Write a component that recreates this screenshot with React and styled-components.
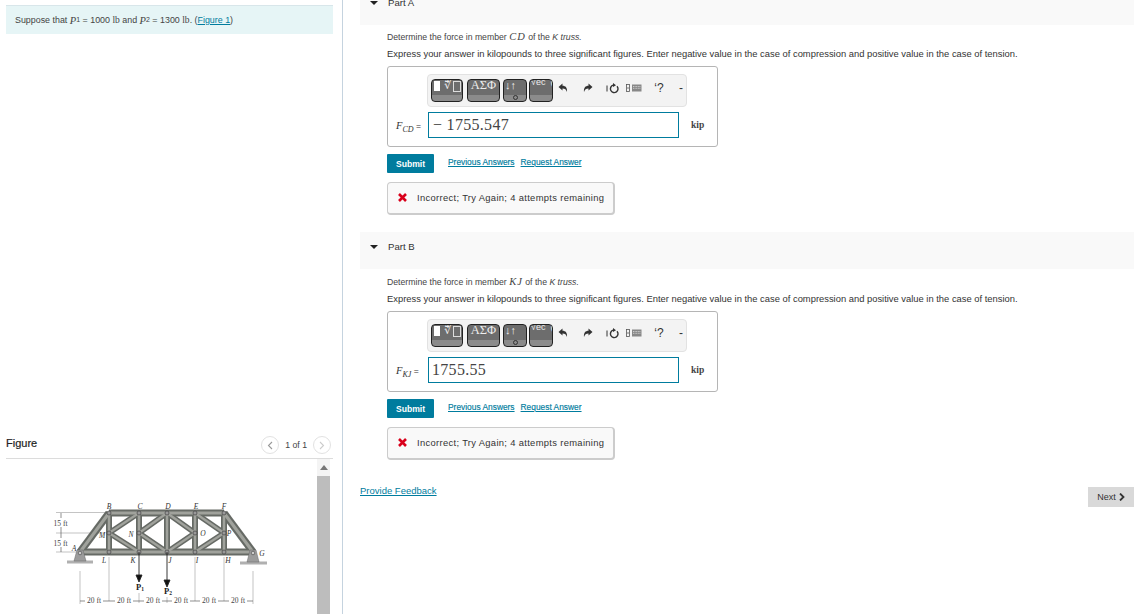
import React from "react";
import styled, { createGlobalStyle } from "styled-components";

const GlobalStyle = createGlobalStyle`
  html, body {
    margin: 0;
    padding: 0;
    background: #fff;
    overflow: hidden;
    font-family: "Liberation Sans", Arial, sans-serif;
    color: #333;
  }
`;

const Page = styled.div`
  display: flex;
  width: 1143px;
  height: 614px;
  overflow: hidden;
`;

const LeftColumn = styled.div`
  width: 343px;
  height: 614px;
  flex: none;
  box-sizing: border-box;
  border-right: 1px solid #c5d3df;
  padding: 5px 9px 0 6px;
  display: flex;
  flex-direction: column;
`;

const IntroBox = styled.div`
  height: 29px;
  box-sizing: border-box;
  background: #e6f5f6;
  border-top: 1px solid #d8e6ea;
  padding: 0 9px;
  display: flex;
  align-items: center;
  font-size: 8.9px;
  color: #444;
  white-space: pre;
`;

const TextLink = styled.a`
  color: #007c9e;
  text-decoration: underline;
`;

const MathVar = styled.span`
  font-family: "Liberation Serif", serif;
  font-style: italic;
  font-size: ${(p) => p.$size || 10.5}px;
  letter-spacing: ${(p) => p.$spacing || 0}px;
`;

const MathRoman = styled.span`
  font-family: "Liberation Serif", serif;
  font-size: 9.5px;
`;

const Sub = styled.sub`
  font-size: 7px;
  line-height: 0;
`;

const FigureHeader = styled.div`
  margin-top: 396px;
  height: 29px;
  box-sizing: border-box;
  border-bottom: 1px solid #dcdcdc;
  display: flex;
  align-items: flex-start;
  justify-content: space-between;
`;

const FigureTitle = styled.div`
  font-size: 11px;
  color: #222;
  margin-top: 7px;
  -webkit-text-stroke: 0.2px #222;
`;

const Pager = styled.div`
  display: flex;
  align-items: center;
  gap: 6px;
  margin-top: 6px;
  margin-right: 2px;
  font-size: 8.7px;
  color: #444;
`;

const PagerButton = styled.div`
  width: 16px;
  height: 16px;
  border: 1px solid #e2e2e2;
  border-radius: 50%;
  display: flex;
  align-items: center;
  justify-content: center;
`;

const FigureBody = styled.div`
  flex: 1;
  display: flex;
  justify-content: space-between;
  overflow: hidden;
  margin-left: -6px;
  margin-right: 3px;
`;

const Scrollbar = styled.div`
  width: 13px;
  background: #f4f4f4;
  display: flex;
  flex-direction: column;
  align-items: center;
`;

const ScrollArrow = styled.div`
  height: 17px;
  flex: none;
  display: flex;
  align-items: center;
  justify-content: center;
`;

const ScrollThumb = styled.div`
  flex: 1;
  width: 100%;
  background: #bdbdbd;
`;

const RightColumn = styled.div`
  flex: 1;
  padding: 0 9px 0 17px;
  display: flex;
  flex-direction: column;
`;

const PartHeader = styled.div`
  height: 37px;
  flex: none;
  box-sizing: border-box;
  background: #f9f9f9;
  display: flex;
  align-items: flex-start;
  padding-top: 9px;
  margin-top: ${(p) => p.$top || 0}px;
  font-size: 9.6px;
  color: #333;
`;

const Caret = styled.div`
  width: 0;
  height: 0;
  margin: 4px 10px 0 10px;
  border-left: 4px solid transparent;
  border-right: 4px solid transparent;
  border-top: 4px solid #222;
`;

const PartBody = styled.div`
  padding-left: 27px;
  display: flex;
  flex-direction: column;
  align-items: flex-start;
`;

const Prompt = styled.div`
  height: 17px;
  line-height: 17px;
  margin-top: ${(p) => p.$top || 0}px;
  font-size: 8.7px;
  color: #444;
  white-space: pre;
`;

const Instructions = styled(Prompt)`
  font-size: 9.4px;
  color: #333;
`;

const AnswerBox = styled.div`
  width: 331px;
  height: 81px;
  box-sizing: border-box;
  margin-top: ${(p) => p.$top || 0}px;
  border: 1px solid #b5b5b5;
  border-radius: 3px;
  padding: 7px 0 0 8px;
`;

const Toolbar = styled.div`
  width: 260px;
  height: 33px;
  box-sizing: border-box;
  margin-left: 31px;
  background: #f3f3f3;
  border: 1px solid #e2e2e2;
  border-radius: 4px;
  display: flex;
  align-items: center;
  padding-left: 3px;
`;

const ToolButton = styled.div`
  width: ${(p) => p.$w}px;
  height: 23px;
  box-sizing: border-box;
  margin-right: ${(p) => p.$gap}px;
  flex: none;
  position: relative;
  border: 1px solid #222;
  border-radius: 4px;
  background: linear-gradient(#6d6d6d 0 72%, #8b8b8b 72% 100%);
  color: #eee;
  overflow: hidden;
  display: flex;
  align-items: flex-start;
  justify-content: ${(p) => (p.$start ? "flex-start" : "center")};
  gap: 1px;
  padding: 0 0 0 ${(p) => (p.$start ? 1 : 0)}px;
  font-family: ${(p) => (p.$sans ? '"Liberation Sans", sans-serif' : '"Liberation Serif", serif')};
  font-size: ${(p) => p.$size || 12}px;
  line-height: ${(p) => p.$line || 11}px;
  white-space: pre;
`;

const WhiteSquare = styled.span`
  width: 6px;
  height: 10px;
  margin-top: 1px;
  background: #fff;
`;

const OutlineSquare = styled.span`
  width: 6px;
  height: 9px;
  margin-top: 1px;
  border: 1px solid #ddd;
`;

const ToolDot = styled.span`
  position: absolute;
  left: 9px;
  bottom: 1px;
  width: 3px;
  height: 3px;
  border: 1px solid #333;
  border-radius: 50%;
`;

const ToolIcons = styled.div`
  display: flex;
  align-items: center;
  margin: 0 0 5px -2px;
  color: #333;
  font-size: 12px;
`;

const IconSlot = styled.div`
  width: ${(p) => p.$w}px;
  display: flex;
  justify-content: center;
`;

const AnswerRow = styled.div`
  display: flex;
  align-items: center;
  margin-top: 5px;
  height: 26px;
`;

const AnswerLabel = styled.div`
  width: 32px;
  flex: none;
  font-size: 8.6px;
  color: #333;
  white-space: pre;
`;

const LabelSub = styled.sub`
  font-size: 8px;
  line-height: 0;
`;

const AnswerInput = styled.div`
  width: 251px;
  height: 26px;
  box-sizing: border-box;
  flex: none;
  border: 1px solid #007c9e;
  padding-left: ${(p) => p.$pad}px;
  display: flex;
  align-items: center;
  font-family: "Liberation Serif", serif;
  font-size: 16px;
  letter-spacing: 0.3px;
  color: #444;
  white-space: pre;
`;

const Unit = styled.div`
  margin-left: 12px;
  font-family: "Liberation Serif", serif;
  font-weight: bold;
  font-size: 9.5px;
  color: #444;
`;

const ActionRow = styled.div`
  display: flex;
  align-items: flex-start;
  margin-top: 7px;
`;

const SubmitButton = styled.div`
  width: 47px;
  height: 19px;
  background: #007c9e;
  border-radius: 1px;
  color: #fff;
  font-size: 8.6px;
  font-weight: bold;
  display: flex;
  align-items: center;
  justify-content: center;
`;

const ActionLink = styled(TextLink)`
  font-size: 8.4px;
  margin-top: 3px;
  -webkit-text-stroke: 0.15px #007c9e;
  margin-left: ${(p) => p.$left}px;
`;

const Feedback = styled.div`
  width: 228px;
  height: 33px;
  box-sizing: border-box;
  margin-top: 9px;
  margin-bottom: ${(p) => p.$bottom || 0}px;
  background: #f9f9f9;
  border: 1px solid #ccc;
  border-bottom-width: 2px;
  border-right-width: 2px;
  border-radius: 4px;
  display: flex;
  align-items: center;
  padding: 0 0 1px 10px;
  gap: 10px;
  font-size: 9.4px;
  letter-spacing: 0.33px;
  color: #333;
  white-space: pre;
`;

const Footer = styled.div`
  display: flex;
  justify-content: space-between;
  align-items: flex-start;
  margin-top: 27px;
`;

const FeedbackLink = styled(TextLink)`
  font-size: 9.5px;
  margin-top: -2px;
`;

const NextButton = styled.div`
  width: 46px;
  height: 20px;
  box-sizing: border-box;
  padding-bottom: 1px;
  background: #d9d9d9;
  display: flex;
  align-items: center;
  justify-content: center;
  gap: 3px;
  font-size: 9px;
  color: #333;
`;

const CrossIcon = () => (
  <svg width="9" height="9" viewBox="0 0 9 9">
    <path d="M1 1 L8 8 M8 1 L1 8" stroke="#d9001b" strokeWidth="2.6" />
  </svg>
);

const UndoIcon = ({ flip }) => (
  <svg width="10" height="10" viewBox="0 0 10 10" transform={flip ? "scale(-1 1)" : undefined}>
    <path d="M0.5 4 L4.5 0.5 V2.8 C7.5 2.8 9.5 4.8 9 9 C8.2 6.5 7 5.4 4.5 5.4 V7.6 Z" fill="#333" />
  </svg>
);

const ResetIcon = () => (
  <svg width="14" height="11" viewBox="0 0 14 11">
    <path d="M1 2.5 V8.5" stroke="#333" strokeWidth="1" />
    <path d="M7 2.2 A3.8 3.8 0 1 0 11 3.2" fill="none" stroke="#333" strokeWidth="1.4" />
    <path d="M7 0 L10 2.2 L7 4 Z" fill="#333" />
  </svg>
);

const KeyboardIcon = () => (
  <svg width="16" height="8" viewBox="0 0 16 8">
    <rect x="0.5" y="0.5" width="3" height="7" fill="none" stroke="#555" strokeWidth="0.8" />
    <path d="M1 4 H3" stroke="#555" strokeWidth="0.8" />
    <rect x="6" y="0.5" width="9.5" height="7" fill="#888" />
    <path d="M7 2.5 H14.5 M7 4.3 H14.5" stroke="#ddd" strokeWidth="0.8" strokeDasharray="1 0.6" />
  </svg>
);

const MathToolbar = () => (
  <Toolbar>
    <ToolButton $w={32} $gap={4}>
      <WhiteSquare />
      {" ∜"}
      <OutlineSquare />
    </ToolButton>
    <ToolButton $w={33} $gap={3} $size={12.5}>ΑΣΦ</ToolButton>
    <ToolButton $w={24} $gap={2} $start $sans $size={11}>
      ↓↑
      <ToolDot />
    </ToolButton>
    <ToolButton $w={24} $gap={0} $start $sans $size={9} $line={5}>√ec  (</ToolButton>
    <ToolIcons>
      <IconSlot $w={24}><UndoIcon /></IconSlot>
      <IconSlot $w={26}><UndoIcon flip /></IconSlot>
      <IconSlot $w={23}><ResetIcon /></IconSlot>
      <IconSlot $w={20}><KeyboardIcon /></IconSlot>
      <IconSlot $w={30}>‘?</IconSlot>
      <IconSlot $w={14}>-</IconSlot>
    </ToolIcons>
  </Toolbar>
);

const PartBlock = ({ name, top, member, symbol, sub, value, pad, promptTop, boxTop, bottom }) => (
  <>
    <PartHeader $top={top}>
      <Caret />
      {name}
    </PartHeader>
    <PartBody>
      <Prompt $top={promptTop}>
        {"Determine the force in member "}
        <MathVar $spacing={1}>{member}</MathVar>
        {" of the "}
        <i>K truss.</i>
      </Prompt>
      <Instructions>
        Express your answer in kilopounds to three significant figures. Enter negative value in the case of compression and positive value in the case of tension.
      </Instructions>
      <AnswerBox $top={boxTop}>
        <MathToolbar />
        <AnswerRow>
          <AnswerLabel>
            <MathVar>{symbol}</MathVar>
            <LabelSub><MathVar $size={8}>{sub}</MathVar></LabelSub>
            {" ="}
          </AnswerLabel>
          <AnswerInput $pad={pad}>{value}</AnswerInput>
          <Unit>kip</Unit>
        </AnswerRow>
      </AnswerBox>
      <ActionRow>
        <SubmitButton>Submit</SubmitButton>
        <ActionLink $left={14}>Previous Answers</ActionLink>
        <ActionLink $left={6}>Request Answer</ActionLink>
      </ActionRow>
      <Feedback $bottom={bottom}>
        <CrossIcon />
        Incorrect; Try Again; 4 attempts remaining
      </Feedback>
    </PartBody>
  </>
);

// [x1, y1, x2, y2, outer stroke width]
const members = [
  [109, 514, 224, 514, 7], [80, 553, 253, 553, 7],
  [109, 514, 109, 553, 6], [139, 514, 139, 553, 6], [167, 514, 167, 553, 6], [195, 514, 195, 553, 6], [224, 514, 224, 553, 6],
  [109, 534, 139, 514, 5.5], [109, 534, 139, 553, 5.5], [139, 534, 167, 514, 5.5], [139, 534, 167, 553, 5.5],
  [195, 534, 167, 514, 5.5], [195, 534, 167, 553, 5.5], [224, 534, 195, 514, 5.5], [224, 534, 195, 553, 5.5],
  [80, 553, 109, 514, 7.5], [224, 514, 253, 553, 7.5],
];

const joints = [
  [109, 514], [139, 514], [167, 514], [195, 514], [224, 514],
  [109, 534], [139, 534], [195, 534], [224, 534],
  [109, 553], [139, 553], [167, 553], [195, 553], [224, 553],
];

const jointLabels = [
  ["B", 109, 510], ["C", 140, 510], ["D", 168, 510], ["E", 196, 510], ["F", 224, 510],
  ["M", 102, 539], ["N", 131, 538], ["O", 203, 537], ["P", 229, 537],
  ["A", 74, 552], ["G", 262, 557], ["L", 104, 564], ["K", 133, 564], ["J", 170, 564], ["I", 197, 564], ["H", 228, 564],
];

const dimensions = [94, 124, 153, 181, 209, 238];

const TrussFigure = () => (
  <svg width="310" height="154" viewBox="0 460 310 154">
    <g stroke="#aaa" strokeWidth="0.7">
      <path d="M56 513.5 H107 M56 534 H104 M56 553 H78" />
      <path d="M80 572 V605 M109 558 V602 M195 558 V602 M224 558 V602 M253 572 V605" />
      <path d="M139 594 V604 M167 598 V604" />
    </g>
    <path d="M61 514 V553 M80 602 H253" stroke="#444" strokeWidth="0.6" />
    <g fontFamily="Liberation Serif, serif" fontSize="7.5" fill="#444" textAnchor="middle">
      <rect x="52" y="519" width="18" height="9" fill="#fff" />
      <text x="60.5" y="527">15 ft</text>
      <rect x="52" y="539" width="18" height="9" fill="#fff" />
      <text x="60.5" y="547">15 ft</text>
      {dimensions.map((x) => (
        <React.Fragment key={x}>
          <rect x={x - 9} y="597" width="18" height="9" fill="#fff" />
          <text x={x} y="604">20 ft</text>
        </React.Fragment>
      ))}
    </g>
    <path d="M67 563 H93 M240 564 H267" stroke="#b0b0b0" strokeWidth="3" />
    <g>
      {members.map(([x1, y1, x2, y2, w], i) => (
        <line key={i} x1={x1} y1={y1} x2={x2} y2={y2} stroke="#666a65" strokeWidth={w} />
      ))}
      {members.map(([x1, y1, x2, y2, w], i) => (
        <line key={i} x1={x1} y1={y1} x2={x2} y2={y2} stroke="#a0a29c" strokeWidth={w * 0.42} />
      ))}
    </g>
    <path d="M74 562 L77 551 H83 L86 562 Z M247 563 L250 551 H256 L259 563 Z" fill="#9c9c9c" stroke="#666" strokeWidth="0.5" />
    <circle cx="80" cy="554" r="1.8" fill="#ccc" stroke="#444" strokeWidth="0.6" />
    <circle cx="253" cy="554" r="1.8" fill="#ccc" stroke="#444" strokeWidth="0.6" />
    {joints.map(([x, y]) => (
      <circle key={`${x}-${y}`} cx={x} cy={y} r="2" fill="#999" stroke="#444" strokeWidth="0.7" />
    ))}
    <g stroke="#222" strokeWidth="0.9" fill="#111">
      <path d="M139 553 V578 M167 553 V583" />
      <path d="M136 576 H142 L139 583 Z M164 581 H170 L167 588 Z" />
    </g>
    <g fontFamily="Liberation Serif, serif" fontSize="7.5" fontStyle="italic" fill="#333" textAnchor="middle">
      {jointLabels.map(([t, x, y]) => (
        <text key={t} x={x} y={y}>{t}</text>
      ))}
    </g>
    <g fontFamily="Liberation Serif, serif" fontSize="8.5" fontWeight="bold" fill="#222">
      <text x="136" y="590.5">P<tspan fontSize="5.5" dy="1">1</tspan></text>
      <text x="164" y="594.5">P<tspan fontSize="5.5" dy="1">2</tspan></text>
    </g>
  </svg>
);

const Chevron = ({ left, color }) => (
  <svg width="6" height="9" viewBox="0 0 6 9">
    <path d={left ? "M5 1 L1.5 4.5 L5 8" : "M1 1 L4.5 4.5 L1 8"} fill="none" stroke={color} strokeWidth="1.1" />
  </svg>
);

export default function App() {
  return (
    <Page>
      <GlobalStyle />
      <LeftColumn>
        <IntroBox>
          {"Suppose that "}
          <MathVar>P</MathVar><Sub>1</Sub>
          {" = 1000 "}
          <MathRoman>lb</MathRoman>
          {" and "}
          <MathVar>P</MathVar><Sub>2</Sub>
          {" = 1300 "}
          <MathRoman>lb</MathRoman>
          {". ("}
          <TextLink>Figure 1</TextLink>
          {")"}
        </IntroBox>
        <FigureHeader>
          <FigureTitle>Figure</FigureTitle>
          <Pager>
            <PagerButton><Chevron left color="#999" /></PagerButton>
            1 of 1
            <PagerButton><Chevron color="#ccc" /></PagerButton>
          </Pager>
        </FigureHeader>
        <FigureBody>
          <TrussFigure />
          <Scrollbar>
            <ScrollArrow>
              <svg width="8" height="5" viewBox="0 0 8 5"><path d="M4 0 L8 5 H0 Z" fill="#777" /></svg>
            </ScrollArrow>
            <ScrollThumb />
          </Scrollbar>
        </FigureBody>
      </LeftColumn>
      <RightColumn>
        <PartBlock
          name="Part A"
          top={-12}
          member="CD"
          symbol="F"
          sub="CD"
          value="− 1755.547"
          pad={4}
          promptTop={3}
          boxTop={4}
          bottom={17}
        />
        <PartBlock
          name="Part B"
          member="KJ"
          symbol="F"
          sub="KJ"
          value="1755.55"
          pad={3}
          promptTop={4}
          boxTop={4}
        />
        <Footer>
          <FeedbackLink>Provide Feedback</FeedbackLink>
          <NextButton>
            Next
            <svg width="6" height="8" viewBox="0 0 6 8"><path d="M1 0.5 L4.5 4 L1 7.5" fill="none" stroke="#333" strokeWidth="1.8" /></svg>
          </NextButton>
        </Footer>
      </RightColumn>
    </Page>
  );
}
